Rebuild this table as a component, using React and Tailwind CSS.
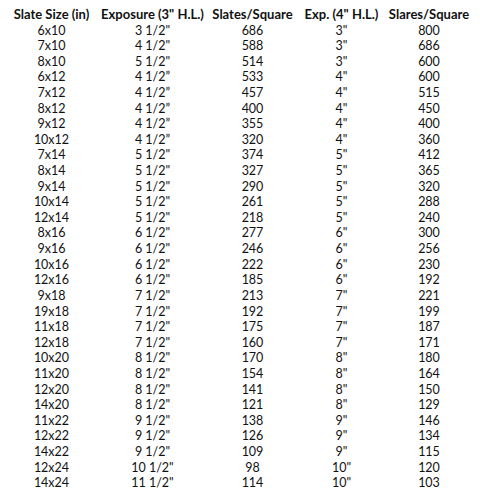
const rows = [
  ["6x10", '3 1/2"', "686", '3"', "800"],
  ["7x10", '4 1/2"', "588", '3"', "686"],
  ["8x10", '5 1/2"', "514", '3"', "600"],
  ["6x12", "4 1/2”", "533", '4"', "600"],
  ["7x12", "4 1/2”", "457", '4"', "515"],
  ["8x12", "4 1/2”", "400", '4"', "450"],
  ["9x12", "4 1/2”", "355", '4"', "400"],
  ["10x12", "4 1/2”", "320", '4"', "360"],
  ["7x14", '5 1/2"', "374", '5"', "412"],
  ["8x14", '5 1/2"', "327", '5"', "365"],
  ["9x14", '5 1/2"', "290", '5"', "320"],
  ["10x14", '5 1/2"', "261", '5"', "288"],
  ["12x14", '5 1/2"', "218", '5"', "240"],
  ["8x16", '6 1/2"', "277", '6"', "300"],
  ["9x16", '6 1/2"', "246", '6"', "256"],
  ["10x16", '6 1/2"', "222", '6"', "230"],
  ["12x16", '6 1/2"', "185", '6"', "192"],
  ["9x18", '7 1/2"', "213", '7"', "221"],
  ["19x18", '7 1/2"', "192", '7"', "199"],
  ["11x18", '7 1/2"', "175", '7"', "187"],
  ["12x18", '7 1/2"', "160", '7"', "171"],
  ["10x20", '8 1/2"', "170", '8"', "180"],
  ["11x20", '8 1/2"', "154", '8"', "164"],
  ["12x20", '8 1/2"', "141", '8"', "150"],
  ["14x20", '8 1/2"', "121", '8"', "129"],
  ["11x22", '9 1/2"', "138", '9"', "146"],
  ["12x22", '9 1/2"', "126", '9"', "134"],
  ["14x22", '9 1/2"', "109", '9"', "115"],
  ["12x24", '10 1/2"', "98", '10"', "120"],
  ["14x24", '11 1/2"', "114", '10"', "103"],
];

const headers = [
  "Slate Size (in)",
  'Exposure (3" H.L.)',
  "Slates/Square",
  'Exp. (4" H.L.)',
  "Slares/Square",
];

const cols = "grid grid-cols-[103px_99px_101px_77px_98px]";

export default function App() {
  return (
    <div className="w-[480px] h-[503px] bg-white text-[#111] overflow-hidden font-['Lato',sans-serif] pt-[6px]">
      <div className={`${cols} h-[17px] items-center font-bold text-[13px]`}>
        {headers.map((h, i) => (
          <div key={i} className="flex justify-center whitespace-nowrap leading-none">
            {h}
          </div>
        ))}
      </div>
      {rows.map((r, ri) => (
        <div key={ri} className={`${cols} h-[15.62px] items-center text-[12.5px]`}>
          {r.map((c, ci) => (
            <div key={ci} className="flex justify-center whitespace-nowrap leading-none">
              {c}
            </div>
          ))}
        </div>
      ))}
    </div>
  );
}
